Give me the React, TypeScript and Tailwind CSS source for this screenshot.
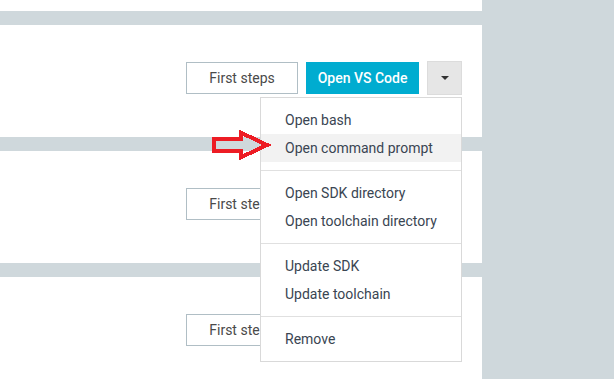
import React from 'react'

function ActionRow({ open, darkToggle }: { open?: boolean; darkToggle?: boolean }) {
  return (
    <div className="flex justify-end pt-9 pr-5">
      <div className="relative flex items-center gap-2 h-[34px]">
        <button className="h-8 w-[112px] border border-[#b0bec5] bg-white text-sm text-[#4a4a4a]">
          First steps
        </button>
        <button className="h-8 w-[113px] bg-[#00acd0] text-sm font-medium text-white">
          Open VS Code
        </button>
        <button
          className={
            'h-[34px] w-[35px] flex items-center justify-center bg-[#e6e6e6] border ' +
            (darkToggle ? 'border-[#e6e6e6] border-r-[#8a949c]' : 'border-[#dcdcdc]')
          }
        >
          <span className="block w-0 h-0 border-l-4 border-r-4 border-t-4 border-l-transparent border-r-transparent border-t-[#333]" />
        </button>

        {open && (
          <div className="absolute right-0 top-full mt-[2px] w-[202px] bg-white border border-[#d9d9d9] py-2 z-10 text-sm text-[#3a4552]">
            <div className="h-7 flex items-center pl-6">Open bash</div>
            <div className="h-7 flex items-center pl-6 bg-[#f2f2f2]">Open command prompt</div>
            <div className="my-2 h-px bg-[#e0e0e0]" />
            <div className="h-7 flex items-center pl-6">Open SDK directory</div>
            <div className="h-7 flex items-center pl-6">Open toolchain directory</div>
            <div className="my-2 h-px bg-[#e0e0e0]" />
            <div className="h-7 flex items-center pl-6">Update SDK</div>
            <div className="h-7 flex items-center pl-6">Update toolchain</div>
            <div className="my-2 h-px bg-[#e0e0e0]" />
            <div className="h-7 flex items-center pl-6">Remove</div>
          </div>
        )}
      </div>
    </div>
  )
}

export default function App() {
  return (
    <div className="relative flex h-[379px] overflow-hidden bg-[#cfd8dc] font-['Roboto',sans-serif]">
      <div className="w-[482px] shrink-0 flex flex-col gap-[14px]">
        <div className="h-[11px] shrink-0 bg-white" />
        <div className="h-[112px] shrink-0 bg-white">
          <ActionRow open />
        </div>
        <div className="h-[112px] shrink-0 bg-white">
          <ActionRow darkToggle />
        </div>
        <div className="h-[112px] shrink-0 bg-white">
          <ActionRow darkToggle />
        </div>
      </div>
      <div className="flex-1" />

      {/* red annotation arrow */}
      <svg
        className="absolute left-[208px] top-[126px] z-20"
        width="68"
        height="38"
        viewBox="0 0 68 38"
        shapeRendering="crispEdges"
      >
        <polygon
          points="6,13 32.5,13 32.5,6.5 59,19 32.5,31.5 32.5,25 6,25"
          fill="none"
          stroke="#ed1c24"
          strokeWidth="4"
          strokeLinejoin="miter"
        />
      </svg>
    </div>
  )
}
